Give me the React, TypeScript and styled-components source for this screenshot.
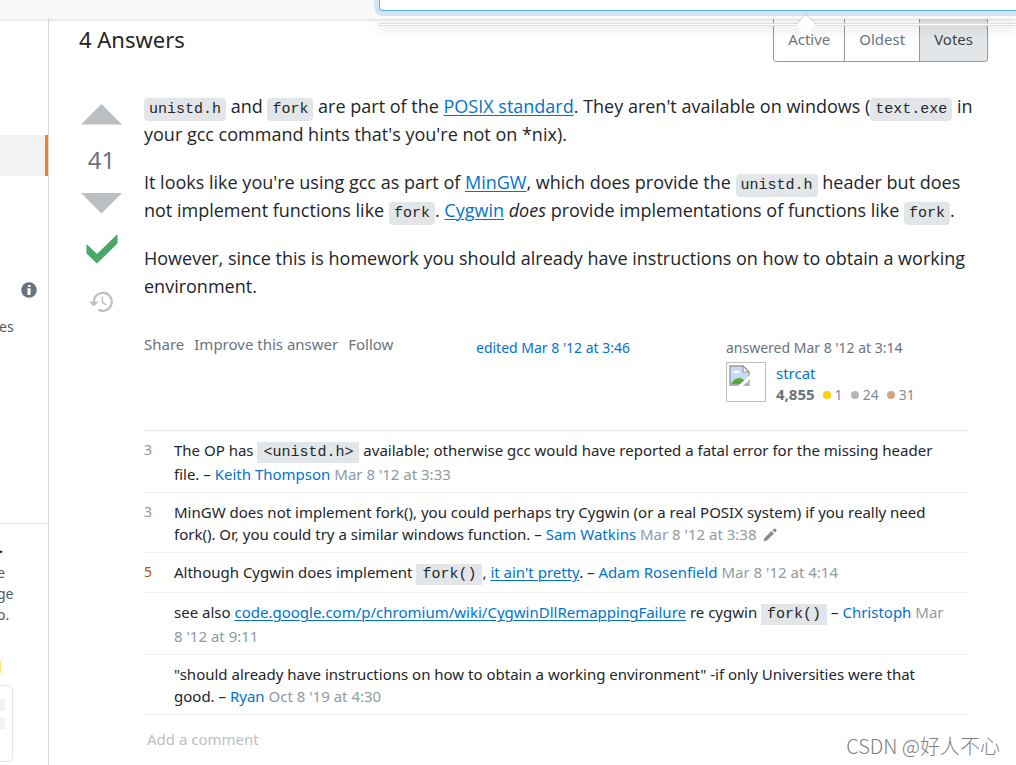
import React from "react";
import styled, { createGlobalStyle } from "styled-components";

const GlobalStyle = createGlobalStyle`
  * { box-sizing: border-box; }
  body {
    margin: 0;
    background: #fff;
    color: #232629;
    font-family: "Noto Sans", "Open Sans", "Noto Sans CJK SC", sans-serif;
    font-size: 15px;
    line-height: 22px;
  }
  a { color: #0074cc; text-decoration: none; }
  p, h2, ul { margin: 0; padding: 0; font-weight: inherit; }
  button { font: inherit; background: none; border: 0; padding: 0; }
  svg { display: block; }
`;

const Page = styled.div`
  position: relative;
  display: flex;
  flex-direction: column;
  min-height: 100vh;
  overflow: hidden;
`;

const TopBar = styled.header`
  position: relative;
  z-index: 2;
  height: 19px;
  padding-left: 379px;
  background: #f8f9f9;
  box-shadow: 0 1px 3px rgba(0, 0, 0, 0.16);
`;

const SearchBox = styled.input`
  display: block;
  width: 100%;
  height: 11px;
  padding: 0 12px;
  border: 1px solid #59adf0;
  border-width: 0 0 1px 1px;
  border-radius: 0 0 0 4px;
  background: #fff;
  box-shadow: 0 0 0 5px #d3e5f2;
  outline: none;
`;

const SearchPopover = styled.div`
  position: absolute;
  top: 23px;
  left: 379px;
  right: 0;
  height: 3px;
  border: 1px solid #dcddde;
  border-right: 0;
  background: #fff;
  box-shadow: 0 3px 10px rgba(0, 0, 0, 0.18);

  &::before {
    content: "";
    position: absolute;
    left: 419px;
    top: -6px;
    width: 14px;
    height: 14px;
    background: #fff;
    transform: rotate(45deg);
    box-shadow: -1px -1px 1px rgba(0, 0, 0, 0.12);
  }
`;

const Columns = styled.div`
  display: flex;
  flex: 1;
`;

const Sidebar = styled.nav`
  flex: 0 0 49px;
  display: flex;
  flex-direction: column;
  overflow: hidden;
  border-right: 1px solid #d6d9dc;
  color: #525960;
  font-size: 14px;
`;

const ActiveItem = styled.a`
  height: 41px;
  margin-top: 116px;
  background: #f1f2f3;
  border-right: 3px solid #f48225;
`;

const InfoIcon = styled.svg`
  margin: 106px 0 0 21px;
`;

const SideNote = styled.p`
  margin: 18px 0 0 -1px;
`;

const Divider = styled.hr`
  width: 100%;
  margin: 185px 0 0;
  border: 0;
  border-top: 1px solid #e3e6e8;
`;

const Promo = styled.div`
  margin: 13px 0 0 -3px;
  line-height: 21px;

  strong { display: block; height: 25px; padding-left: 2px; color: #232629; }
  span { display: block; }
`;

const Highlight = styled.div`
  width: 1px;
  height: 12px;
  margin-top: 36px;
  background: #ffe27a;
`;

const PromoCard = styled.div`
  display: flex;
  flex-direction: column;
  gap: 6px;
  width: 13px;
  height: 77px;
  margin-top: 12px;
  padding: 13px 7px 0 0;
  border: 1px solid #e3e6e8;
  border-left: 0;
  border-radius: 0 5px 5px 0;

  div { height: 12px; background: #f1f2f3; }
`;

const Main = styled.main`
  flex: 1;
  min-width: 0;
  padding: 0 28px 12px 30px;
`;

const AnswersHeader = styled.div`
  display: flex;
  justify-content: space-between;
  align-items: flex-start;
  height: 43px;
`;

const Title = styled.h2`
  font-size: 22px;
  line-height: 40px;
`;

const SortGroup = styled.div`
  display: flex;
  height: 43px;
  border: 1px solid #9199a1;
  border-top: 0;
  border-radius: 0 0 4px 4px;
  overflow: hidden;
`;

const SortButton = styled.button<{ $active?: boolean }>`
  display: flex;
  padding: 0 14px;
  line-height: 40px;
  color: ${(p) => (p.$active ? "#3b4045" : "#6a737c")};
  background: ${(p) => (p.$active ? "#e3e6e8" : "#fff")};

  & + & { border-left: 1px solid #9199a1; }
`;

const Answer = styled.article`
  display: grid;
  grid-template-columns: 45px minmax(0, 1fr);
  column-gap: 20px;
  padding: 30px 20px 0 0;
`;

const VoteColumn = styled.div`
  display: flex;
  flex-direction: column;
  align-items: center;
  padding-top: 12px;
`;

const VoteCount = styled.span`
  margin: 16px 0 14px;
  font-size: 24px;
  line-height: 38px;
  color: #6a737c;
`;

const Check = styled.svg`
  margin-top: 20px;
`;

const HistoryButton = styled.button`
  margin: 27px 2px 0 0;
`;

const Prose = styled.div`
  display: flex;
  flex-direction: column;
  gap: 20px;
  margin-right: -12px;
  font-family: "Open Sans", "Noto Sans", sans-serif;
  font-size: 18px;
  line-height: 28px;

  a { text-decoration: underline; text-decoration-thickness: 1px; text-underline-offset: 2px; }
`;

const Code = styled.code`
  padding: 3px 5px;
  border-radius: 4px;
  background: #e3e6e8;
  font-family: "Liberation Mono", monospace;
  font-size: 15px;
  line-height: 20px;
`;

const PostFooter = styled.div`
  display: flex;
  align-items: flex-start;
  margin-top: 33px;
`;

const Menu = styled.div`
  display: flex;
  flex: 1;
  gap: 10px;

  a { color: #6a737c; }
`;

const Signature = styled.div<{ $last?: boolean }>`
  flex: 0 0 ${(p) => (p.$last ? 242 : 250)}px;
  padding-top: 4px;
  color: #6a737c;
  font-size: 14px;
`;

const UserCard = styled.div`
  display: flex;
  gap: 10px;
  margin-top: 3px;
  line-height: 21px;
`;

const Avatar = styled.a`
  width: 40px;
  height: 40px;
  padding: 2px;
  border: 1px solid #c0c0c0;
`;

const UserInfo = styled.div`
  padding-top: 1px;

  > a { font-size: 15px; }
`;

const Reputation = styled.div`
  display: flex;
  align-items: center;
  color: #838c95;

  strong { color: #6a737c; font-size: 15px; }
`;

const Badge = styled.span<{ $color: string }>`
  display: flex;
  align-items: center;
  gap: 4px;
  margin-left: 8px;

  &::before {
    content: "";
    width: 8px;
    height: 8px;
    border-radius: 50%;
    background: ${(p) => p.$color};
  }
`;

const Comments = styled.ul`
  margin-top: 25px;
  border-top: 1px solid #e3e6e8;
  list-style: none;
`;

const CommentRow = styled.li`
  display: grid;
  grid-template-columns: 30px minmax(0, 1fr);
  padding: 8px 0 7px;
  border-bottom: 1px solid #eff0f1;
`;

const Score = styled.span<{ $hot?: boolean }>`
  font-size: 14px;
  color: ${(p) => (p.$hot ? "#a9501e" : "#9199a1")};
`;

const CommentText = styled.p`
  padding-right: 20px;

  time { color: #9199a1; }
  svg { display: inline-block; vertical-align: -2px; margin-left: 3px; }
`;

const CommentCode = styled.code`
  display: inline-block;
  padding: 0 6px;
  background: #e3e6e8;
  font-family: "Liberation Mono", monospace;
  font-size: 15px;
  line-height: 21px;
`;

const InlineLink = styled.a`
  text-decoration: underline;
  text-decoration-thickness: 1px;
  text-underline-offset: 2px;
`;

const AddComment = styled.a`
  display: inline-block;
  margin: 13px 0 0 3px;
  color: #bbc0c4;
`;

const Watermark = styled.div`
  position: absolute;
  right: 16px;
  bottom: 5px;
  font-family: "Noto Sans CJK SC", sans-serif;
  font-size: 20px;
  font-weight: 300;
  line-height: 28px;
  color: #808080;
`;

const Arrow = ({ down }: { down?: boolean }) => (
  <svg width="41" height="21" viewBox="0 0 41 21" fill="#babfc4">
    <path d={down ? "M0 0h41L20.500 20.500z" : "M0 20.500h41L20.500 0z"} />
  </svg>
);

const BrokenImage = () => (
  <svg width="21" height="21" viewBox="0 0 21 21">
    <path d="M1 1h13l6 6v13H1z" fill="#c8daf6" stroke="#9a9a9a" strokeWidth="1.300" />
    <path d="M14 1v6h6z" fill="#fff" stroke="#9a9a9a" strokeWidth="1.200" />
    <path d="M4 8q0-2 2-2 1-2 3 0 2 0 2 2z" fill="#fff" />
    <path d="M2 19c2-4 5-6 8-6s6 2 8 6z" fill="#56ab38" />
    <path d="M9 21l12-11v4l-7 7z" fill="#fff" />
  </svg>
);

type CommentProps = { score?: number; hot?: boolean; author: string; date: string; edited?: boolean; children: React.ReactNode };

const Comment = ({ score, hot, author, date, edited, children }: CommentProps) => (
  <CommentRow>
    <Score $hot={hot}>{score}</Score>
    <CommentText>
      {children} – <a href="#">{author}</a> <time>{date}</time>
      {edited && (
        <>
          {" "}
          <svg width="14" height="14" viewBox="0 0 14 14" fill="#848d95">
            <path d="M0.500 13.500l1-3.500 7-7 2.500 2.500-7 7zM9.500 2l1.300-1.300q.7-.6 1.400 0l1.100 1.100q.6.700 0 1.400L12 4.500z" />
          </svg>
        </>
      )}
    </CommentText>
  </CommentRow>
);

export default function App() {
  return (
    <>
      <GlobalStyle />
      <Page>
        <TopBar>
          <SearchBox type="text" aria-label="Search" />
          <SearchPopover />
        </TopBar>
        <Columns>
          <Sidebar>
            <ActiveItem href="#" aria-label="Questions" />
            <InfoIcon width="16" height="16" viewBox="0 0 16 16">
              <circle cx="8" cy="8" r="7.800" fill="#6a737c" />
              <path d="M7 3h2.500v2H7zM6.500 6.300h3V13h-3z" fill="#fff" />
            </InfoIcon>
            <SideNote>es</SideNote>
            <Divider />
            <Promo>
              <strong>.</strong>
              <span>e</span>
              <span>ge</span>
              <span>o.</span>
            </Promo>
            <Highlight />
            <PromoCard>
              <div />
              <div />
            </PromoCard>
          </Sidebar>
          <Main>
            <AnswersHeader>
              <Title>4 Answers</Title>
              <SortGroup>
                <SortButton>Active</SortButton>
                <SortButton>Oldest</SortButton>
                <SortButton $active>Votes</SortButton>
              </SortGroup>
            </AnswersHeader>
            <Answer>
              <VoteColumn>
                <button aria-label="Up vote"><Arrow /></button>
                <VoteCount>41</VoteCount>
                <button aria-label="Down vote"><Arrow down /></button>
                <Check width="32" height="30" viewBox="0 0 32 30" fill="#48a868">
                  <path d="M0.500 10l10.500 10L31.500 0v9.500L11 29.500 0.500 19.500z" />
                </Check>
                <HistoryButton aria-label="Show activity">
                  <svg width="24" height="21" viewBox="0 0 24 21" fill="none" stroke="#babfc4">
                    <path d="M4.800 11A9 9 0 1 1 9.500 18.700" strokeWidth="2.200" />
                    <path d="M0 10.500h9.500L4.800 15.500z" fill="#babfc4" stroke="none" />
                    <path d="M13.500 5.500v6l4 2.500" strokeWidth="1.400" />
                  </svg>
                </HistoryButton>
              </VoteColumn>
              <div>
                <Prose>
                  <p>
                    <Code>unistd.h</Code> and <Code>fork</Code> are part of the <a href="#">POSIX standard</a>. They
                    aren't available on windows (<Code>text.exe</Code> in your gcc command hints that's you're not on
                    *nix).
                  </p>
                  <p>
                    It looks like you're using gcc as part of <a href="#">MinGW</a>, which does provide
                    the <Code>unistd.h</Code> header but does not implement functions like <Code>fork</Code>.{" "}
                    <a href="#">Cygwin</a> <em>does</em> provide implementations of functions like <Code>fork</Code>.
                  </p>
                  <p>
                    However, since this is homework you should already have instructions on how to obtain a working
                    environment.
                  </p>
                </Prose>
                <PostFooter>
                  <Menu>
                    <a href="#">Share</a>
                    <a href="#">Improve this answer</a>
                    <a href="#">Follow</a>
                  </Menu>
                  <Signature>
                    <a href="#">edited Mar 8 '12 at 3:46</a>
                  </Signature>
                  <Signature $last>
                    answered Mar 8 '12 at 3:14
                    <UserCard>
                      <Avatar href="#" aria-label="strcat"><BrokenImage /></Avatar>
                      <UserInfo>
                        <a href="#">strcat</a>
                        <Reputation>
                          <strong>4,855</strong>
                          <Badge $color="#ffcc01">1</Badge>
                          <Badge $color="#b4b8bc">24</Badge>
                          <Badge $color="#d1a684">31</Badge>
                        </Reputation>
                      </UserInfo>
                    </UserCard>
                  </Signature>
                </PostFooter>
                <Comments>
                  <Comment score={3} author="Keith Thompson" date="Mar 8 '12 at 3:33">
                    The OP has <CommentCode>&lt;unistd.h&gt;</CommentCode> available; otherwise gcc would have reported
                    a fatal error for the missing header file.
                  </Comment>
                  <Comment score={3} author="Sam Watkins" date="Mar 8 '12 at 3:38" edited>
                    MinGW does not implement fork(), you could perhaps try Cygwin (or a real POSIX system) if you really
                    need fork(). Or, you could try a similar windows function.
                  </Comment>
                  <Comment score={5} hot author="Adam Rosenfield" date="Mar 8 '12 at 4:14">
                    Although Cygwin does implement <CommentCode>fork()</CommentCode>,{" "}
                    <InlineLink href="#">it ain't pretty</InlineLink>.
                  </Comment>
                  <Comment author="Christoph" date="Mar 8 '12 at 9:11">
                    see also <InlineLink href="#">code.google.com/p/chromium/wiki/CygwinDllRemappingFailure</InlineLink>{" "}
                    re cygwin <CommentCode>fork()</CommentCode>
                  </Comment>
                  <Comment author="Ryan" date="Oct 8 '19 at 4:30">
                    "should already have instructions on how to obtain a working environment" -if only Universities were
                    that good.
                  </Comment>
                </Comments>
                <AddComment href="#">Add a comment</AddComment>
              </div>
            </Answer>
          </Main>
        </Columns>
        <Watermark>CSDN @好人不心</Watermark>
      </Page>
    </>
  );
}
